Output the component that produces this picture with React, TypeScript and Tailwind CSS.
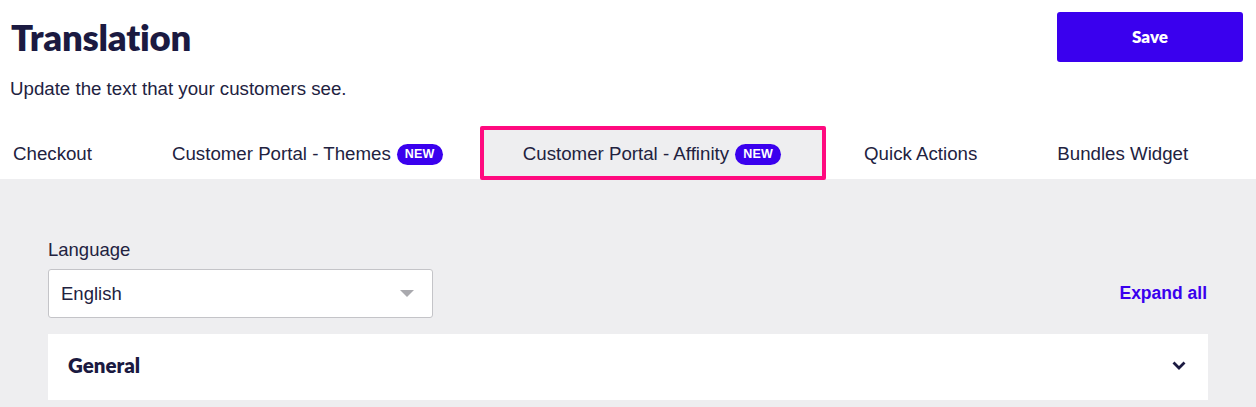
import { useState } from "react";

const tabs = [
  { label: "Checkout" },
  { label: "Customer Portal - Themes", isNew: true },
  { label: "Customer Portal - Affinity", isNew: true },
  { label: "Quick Actions" },
  { label: "Bundles Widget" },
];

const heading = { fontFamily: "Lato, 'Noto Sans', sans-serif" };

const NewBadge = () => (
  <span
    className="ml-[6px] inline-flex h-[21px] w-[46px] items-center justify-center rounded-full bg-[#3a00ee] text-[12.5px] font-bold tracking-[0.2px] text-white"
  >
    NEW
  </span>
);

const App = () => {
  const [active, setActive] = useState(2);

  return (
    <div
      className="min-h-[407px] w-full bg-white text-[#1f1f45]"
      style={{ fontFamily: "'Liberation Sans', Arial, sans-serif" }}
    >
      {/* Header */}
      <div className="flex items-start justify-between pl-[11px] pr-[13px] pt-[12px]">
        <h1
          className="mt-[4px] text-[36.5px] font-extrabold leading-[42px] tracking-[-0.2px] text-[#1b1a41]"
          style={heading}
        >
          Translation
        </h1>
        <button
          className="h-[50px] w-[186px] rounded-[3px] bg-[#3a00ee] text-[17px] font-extrabold text-white"
          style={heading}
        >
          Save
        </button>
      </div>
      <p className="mt-[16px] pl-[10px] text-[18.7px] leading-[22px] text-[#22223f]">
        Update the text that your customers see.
      </p>

      {/* Tabs */}
      <div className="mt-[26px] flex pl-[9px]">
        {tabs.map((tab, i) => (
          <button
            key={tab.label}
            onClick={() => setActive(i)}
            className={
              "flex h-[54px] items-center rounded-[2px] border-4 pt-[3px] text-[18.7px] text-[#22223f] " +
              (i === 0 ? "pl-0 pr-[36px] " : "") +
              (i !== 0 && i !== active ? "px-[36px] " : "") +
              (i === active
                ? "-ml-[3px] -mr-[2px] border-[#ff0a7f] bg-[#eeeef0] pl-[39px] pr-[41px]"
                : "border-transparent bg-transparent")
            }
          >
            {tab.label}
            {tab.isNew && <NewBadge />}
          </button>
        ))}
      </div>

      {/* Content */}
      <div className="-mt-[1px] bg-[#eeeef0] px-[48px] pb-[7px] pt-[60px]">
        <label className="block text-[18.5px] leading-[22px] text-[#22223f]">
          Language
        </label>
        <div className="mt-[8px] flex items-center justify-between">
          <div className="flex h-[49px] w-[385px] items-center justify-between rounded-[3px] border border-[#c4c4c8] bg-white pl-[12px] pr-[18px]">
            <span className="text-[18.5px] text-[#22223f]">English</span>
            <svg width="14" height="7" viewBox="0 0 14 7">
              <path d="M0 0h14L7 7z" fill="#a9a9ae" />
            </svg>
          </div>
          <button className="mr-[1px] text-[17.5px] font-bold text-[#3a00ee]">
            Expand all
          </button>
        </div>

        <div className="mt-[16px] flex h-[66px] items-center justify-between bg-white pb-[3px] pl-[20px] pr-[22px]">
          <span className="text-[20.5px] font-extrabold text-[#1b1a41]" style={heading}>
            General
          </span>
          <svg width="14" height="9" viewBox="0 0 14 9" fill="none">
            <path d="M1.5 1.5L7 7l5.5-5.5" stroke="#1b1a41" strokeWidth="2.8" />
          </svg>
        </div>
      </div>
    </div>
  );
};

export default App;
